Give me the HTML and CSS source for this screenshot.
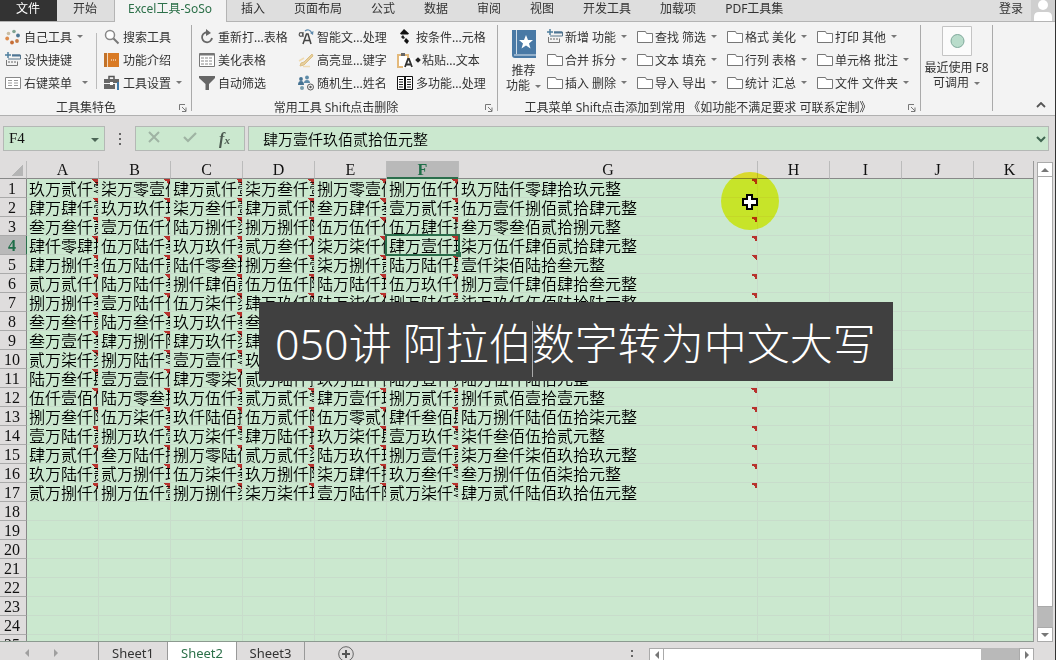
FILE: index.html
```
<!DOCTYPE html>
<html lang="zh-CN">
<head>
  <meta charset="UTF-8">
  <title>Excel工具-SoSo</title>
  <meta name="viewport" content="width=device-width, initial-scale=1.0">
  <link rel="stylesheet" href="styles.css">
</head>
<body>

  <!-- shared icons -->
  <svg class="sprite" aria-hidden="true">
    <symbol id="i-dots" viewBox="0 0 16 16">
      <circle cx="9" cy="2.500" r="1.800" fill="#7fa493"/><circle cx="3.500" cy="4.500" r="1.800" fill="#c9bda4"/>
      <circle cx="13" cy="6.500" r="1.900" fill="#4d7896"/><circle cx="2.200" cy="9.500" r="1.900" fill="#dd8b4c"/>
      <circle cx="12" cy="12" r="1.900" fill="#c57b45"/><circle cx="7" cy="13.500" r="1.900" fill="#c66d35"/>
    </symbol>
    <symbol id="i-form" viewBox="0 0 16 16">
      <path d="M3 0v6M0 3h6" stroke="#4d7f9f" stroke-width="1.500"/>
      <path d="M7 3h8.500v4H3" fill="none" stroke="#56748a"/><path d="M7 3.500h8" stroke="#4d7594" stroke-width="2"/>
      <path d="M1.500 8v5.500h11V9.500" fill="none" stroke="#777"/><path d="M3 10h8" stroke="#666" stroke-dasharray="2 1"/>
    </symbol>
    <symbol id="i-list" viewBox="0 0 16 16">
      <path d="M.5 2.500h15v11H.5z" fill="#fff" stroke="#888"/>
      <path d="M3 5.500h4M3 8h4M3 10.500h4M9 5.500h4M9 8h4M9 10.500h4" stroke="#999"/>
    </symbol>
    <symbol id="i-search" viewBox="0 0 16 16">
      <circle cx="6" cy="6" r="4.500" fill="#fff" stroke="#888" stroke-width="1.500"/><path d="M9.500 9.500l5 5" stroke="#777" stroke-width="2"/>
    </symbol>
    <symbol id="i-book" viewBox="0 0 16 16">
      <path d="M0 1h3v14H0z" fill="#c27229"/><path d="M4 1h11v14H4z" fill="#d97a24"/>
      <path d="M3.500 1v14" stroke="#f7d9bb"/><path d="M7 8h6" stroke="#fff" stroke-dasharray="1 1"/>
    </symbol>
    <symbol id="i-case" viewBox="0 0 16 16">
      <path d="M5 4V1.500h5V4" fill="none" stroke="#555" stroke-width="1.500"/><path d="M0 4h15v4H0zM0 9h11v5H0z" fill="#666"/>
      <path d="M6 7h3v3H6z" fill="#fff"/><path d="M14 7v8" stroke="#3f79a8" stroke-width="2"/>
    </symbol>
    <symbol id="i-redo" viewBox="0 0 16 16">
      <path d="M9.500 3.500A5 5 0 1 0 13 9" fill="none" stroke="#666" stroke-width="1.800"/><path d="M7 0l5 4-5 3z" fill="#666"/>
    </symbol>
    <symbol id="i-table" viewBox="0 0 16 16">
      <path d="M.5 1.500h15v13H.5z" fill="#fff" stroke="#777"/><path d="M1 2.500h14" stroke="#777" stroke-width="2"/>
      <path d="M2 6h12M2 9h12M2 12h12" stroke="#888" stroke-dasharray="3 1"/>
    </symbol>
    <symbol id="i-funnel" viewBox="0 0 16 16"><path d="M0 1h16v2l-6 6v6H6.500V9L0 3z" fill="#666"/></symbol>
    <symbol id="i-font" viewBox="0 0 16 16">
      <path d="M5 15l3.500-10h1.500L13 15M6.500 11.500h5" fill="none" stroke="#444" stroke-width="1.500"/>
      <circle cx="3" cy="5.500" r="1.800" fill="none" stroke="#555" stroke-width="1.200"/><path d="M5 3v5" stroke="#555" stroke-width="1.200"/>
      <path d="M7 2q4-3 7 2" fill="none" stroke="#5b87aa" stroke-width="1.200"/><path d="M15.500 2l-.5 4-3-2z" fill="#5b87aa"/>
    </symbol>
    <symbol id="i-brush" viewBox="0 0 16 16">
      <path d="M14 2L6 10l-3 1-1 3 4-1 9-9z" fill="#e7cf9d" stroke="#dbbf83"/><path d="M1 9l5-3M5 14.500h7" stroke="#efdcb4" stroke-width="1.500"/>
    </symbol>
    <symbol id="i-people" viewBox="0 0 16 16">
      <circle cx="3" cy="4" r="1.900" fill="#467393"/><path d="M0 10q0-4 3-4t3 4z" fill="#467393"/>
      <circle cx="9" cy="2.500" r="1.900" fill="#5d8ba8"/><path d="M6 8q0-3 3-3t3 3z" fill="#5d8ba8"/>
      <circle cx="4" cy="13" r="2" fill="#789cab"/>
      <circle cx="12.500" cy="12" r="3" fill="none" stroke="#555"/><circle cx="12.500" cy="12" r="1.200" fill="#555"/>
    </symbol>
    <symbol id="i-cond" viewBox="0 0 16 16">
      <path d="M7 0l5 4.500-1 1H4L3 4.500z" fill="#111"/><path d="M4 8l2-2 2 3-2 1z" fill="#222"/><path d="M9 9l3 3-2 3-3-3z" fill="#111"/>
    </symbol>
    <symbol id="i-paste" viewBox="0 0 16 16">
      <path d="M1 3h10v12H1z" fill="#fff" stroke="#e3b97b" stroke-width="2"/><path d="M4 1h4v3H4z" fill="#666"/>
      <path d="M6 6h10v10H6z" fill="#fff"/><path d="M8 15l3-8h1l3 8M9 12.500h5" fill="none" stroke="#333" stroke-width="1.800"/>
    </symbol>
    <symbol id="i-panes" viewBox="0 0 16 16">
      <path d="M.5 1.500h15v13H.5z" fill="#fff" stroke="#111"/><path d="M8 1v14" stroke="#111" stroke-width="2"/>
      <path d="M2 4.500h4M2 7h4M2 9.500h4M2 12h4M10 4.500h4M10 7h4M10 9.500h4M10 12h4" stroke="#111"/>
    </symbol>
    <symbol id="i-folder" viewBox="0 0 16 16"><path d="M.5 13.500v-11h8l1 2h6v9z" fill="#fff" stroke="#777"/></symbol>
    <symbol id="i-star" viewBox="0 0 26 30">
      <path d="M1 1h24v28H4q-3 0-3-3z" fill="#4979a5"/><path d="M5.500 1v24" stroke="#cfdde9"/><path d="M3 26h22" stroke="#dfe8f0"/>
      <path d="M15 6l2 5h5l-4 3.500 1.500 5-4.500-3-4.500 3 1.500-5L8 11h5z" fill="#fff"/>
    </symbol>
    <symbol id="i-launch" viewBox="0 0 8 8"><path d="M.5 6V.5H6M3 3l4 4M7 3.500V7.500H3" fill="none" stroke="#777"/></symbol>
  </svg>

  <nav class="tabs">
    <a class="tab file" href="#">文件</a>
    <a class="tab home" href="#">开始</a>
    <a class="tab active" href="#">Excel工具-SoSo</a>
    <a class="tab" href="#">插入</a>
    <a class="tab" href="#">页面布局</a>
    <a class="tab" href="#">公式</a>
    <a class="tab" href="#">数据</a>
    <a class="tab" href="#">审阅</a>
    <a class="tab" href="#">视图</a>
    <a class="tab" href="#">开发工具</a>
    <a class="tab" href="#">加载项</a>
    <a class="tab" href="#">PDF工具集</a>
    <a class="login" href="#">登录</a>
    <svg class="avatar" viewBox="0 0 24 21"><path fill="#cfcfcf" d="M0 0h24v21H0z"/><circle cx="12" cy="5" r="5" fill="#fff"/><path d="M3 21v-4q0-5 5-5h8q5 0 5 5v4z" fill="#fff"/></svg>
  </nav>

  <section class="ribbon">
    <div class="group features">
      <div class="tools">
        <button class="tool"><svg><use href="#i-dots"/></svg>自己工具<i class="caret"></i></button>
        <button class="tool"><svg><use href="#i-form"/></svg>设快捷键</button>
        <button class="tool"><svg><use href="#i-list"/></svg>右键菜单<i class="caret far"></i></button>
        <button class="tool"><svg><use href="#i-search"/></svg>搜索工具</button>
        <button class="tool"><svg><use href="#i-book"/></svg>功能介绍</button>
        <button class="tool"><svg><use href="#i-case"/></svg>工具设置<i class="caret"></i></button>
      </div>
      <div class="caption">工具集特色<svg class="launch"><use href="#i-launch"/></svg></div>
    </div>

    <div class="group common">
      <div class="tools">
        <button class="tool"><svg><use href="#i-redo"/></svg>重新打...表格</button>
        <button class="tool"><svg><use href="#i-table"/></svg>美化表格</button>
        <button class="tool"><svg><use href="#i-funnel"/></svg>自动筛选</button>
        <button class="tool"><svg><use href="#i-font"/></svg>智能文...处理</button>
        <button class="tool"><svg><use href="#i-brush"/></svg>高亮显...键字</button>
        <button class="tool"><svg><use href="#i-people"/></svg>随机生...姓名</button>
        <button class="tool"><svg><use href="#i-cond"/></svg>按条件...元格</button>
        <button class="tool"><svg><use href="#i-paste"/></svg><span class="diamond"></span>粘贴...文本</button>
        <button class="tool"><svg><use href="#i-panes"/></svg>多功能...处理</button>
      </div>
      <div class="caption">常用工具 Shift点击删除<svg class="launch"><use href="#i-launch"/></svg></div>
    </div>

    <div class="group menus">
      <div class="menus-body">
        <button class="big"><svg class="star"><use href="#i-star"/></svg><span>推荐</span><span>功能<i class="caret"></i></span></button>
        <div class="tools">
          <button class="tool"><svg><use href="#i-form"/></svg>新增 功能<i class="caret"></i></button>
          <button class="tool"><svg><use href="#i-folder"/></svg>合并 拆分<i class="caret"></i></button>
          <button class="tool"><svg><use href="#i-folder"/></svg>插入 删除<i class="caret"></i></button>
          <button class="tool"><svg><use href="#i-folder"/></svg>查找 筛选<i class="caret"></i></button>
          <button class="tool"><svg><use href="#i-folder"/></svg>文本 填充<i class="caret"></i></button>
          <button class="tool"><svg><use href="#i-folder"/></svg>导入 导出<i class="caret"></i></button>
          <button class="tool"><svg><use href="#i-folder"/></svg>格式 美化<i class="caret"></i></button>
          <button class="tool"><svg><use href="#i-folder"/></svg>行列 表格<i class="caret"></i></button>
          <button class="tool"><svg><use href="#i-folder"/></svg>统计 汇总<i class="caret"></i></button>
          <button class="tool"><svg><use href="#i-folder"/></svg>打印 其他<i class="caret"></i></button>
          <button class="tool"><svg><use href="#i-folder"/></svg>单元格 批注<i class="caret"></i></button>
          <button class="tool"><svg><use href="#i-folder"/></svg>文件 文件夹<i class="caret"></i></button>
        </div>
      </div>
      <div class="caption">工具菜单 Shift点击添加到常用 《如功能不满足要求 可联系定制》<svg class="launch"><use href="#i-launch"/></svg></div>
    </div>

    <div class="group recent">
      <button class="big"><svg class="record" viewBox="0 0 30 30"><path d="M.5.5h29v29H.5z" fill="#fbfbfb" stroke="#c4c4c4"/><circle cx="15.500" cy="15" r="6.500" fill="#b9dccb" stroke="#7fa99b"/></svg><span>最近使用 F8</span><span>可调用<i class="caret"></i></span></button>
    </div>
    <button class="collapse" aria-label="折叠功能区"><svg viewBox="0 0 10 6"><path d="M1 5l4-4 4 4" fill="none" stroke="#555" stroke-width="1.800"/></svg></button>
  </section>

  <section class="formula-bar">
    <div class="name-box">
      <input type="text" value="F4" aria-label="名称框">
      <button aria-label="名称列表"><i class="caret"></i></button>
    </div>
    <span class="grip"></span>
    <div class="fx-buttons">
      <button aria-label="取消"><svg viewBox="0 0 14 12"><path d="M2 1l10 10M12 1L2 11" stroke="#9fb3a3" stroke-width="2"/></svg></button>
      <button aria-label="输入"><svg viewBox="0 0 14 12"><path d="M1 6l4 4 8-8" fill="none" stroke="#9fb3a3" stroke-width="2.200"/></svg></button>
      <button class="fx" aria-label="插入函数">f<small>x</small></button>
    </div>
    <div class="formula">
      <input type="text" value="肆万壹仟玖佰贰拾伍元整" aria-label="编辑栏">
      <button aria-label="展开编辑栏"><svg viewBox="0 0 10 7"><path d="M1 1l4 4 4-4" fill="none" stroke="#3f6650" stroke-width="2"/></svg></button>
    </div>
  </section>

  <main class="workspace">
    <div class="grid">
      <table class="sheet">
        <colgroup>
          <col class="c-head"><col><col><col><col><col><col><col class="c-wide"><col><col><col><col>
        </colgroup>
        <thead>
          <tr><th class="corner"></th><th>A</th><th>B</th><th>C</th><th>D</th><th>E</th><th class="on">F</th><th>G</th><th>H</th><th>I</th><th>J</th><th>K</th></tr>
        </thead>
        <tbody id="rows"></tbody>
      </table>
    </div>
    <div class="v-scroll">
      <button aria-label="向上"><i class="arrow up"></i></button>
      <div class="thumb"></div>
      <div class="track"></div>
      <button aria-label="向下"><i class="arrow down"></i></button>
    </div>
    <div class="halo"></div>
    <svg class="pointer" viewBox="0 0 16 16"><path d="M5 1h5v4h5v6h-5v4H5v-4H1V5h4z" fill="#fff" stroke="#000" stroke-width="2"/></svg>
    <div class="title-card">050讲 阿拉伯<span class="ibeam"></span>数字转为中文大写</div>
  </main>

  <footer class="sheet-bar">
    <div class="sheet-nav">
      <button aria-label="上一个"><i class="arrow left"></i></button>
      <button aria-label="下一个"><i class="arrow right"></i></button>
    </div>
    <a class="sheet-tab" href="#">Sheet1</a>
    <a class="sheet-tab current" href="#">Sheet2</a>
    <a class="sheet-tab" href="#">Sheet3</a>
    <button class="add" aria-label="新工作表"><svg viewBox="0 0 16 16"><circle cx="8" cy="8" r="7.300" fill="none" stroke="#666"/><path d="M8 4v8M4 8h8" stroke="#555" stroke-width="2"/></svg></button>
    <span class="grip"></span>
    <div class="h-scroll">
      <button aria-label="向左"><i class="arrow left"></i></button>
      <div class="thumb"></div>
      <div class="track"></div>
      <button aria-label="向右"><i class="arrow right"></i></button>
    </div>
  </footer>

  <script>
    let data = [
      "玖万贰仟零 柒万零壹佰 肆万贰仟壹 柒万叁仟壹 捌万零壹佰 捌万伍仟伍 玖万陆仟零肆拾玖元整",
      "肆万肆仟壹 玖万玖仟玖 柒万叁仟壹 肆万贰仟陆 叁万肆仟叁 壹万贰仟叁 伍万壹仟捌佰贰拾肆元整",
      "叁万叁仟贰 壹万伍仟伍 陆万捌仟柒 捌万捌仟陆 伍万伍仟伍 伍万肆仟捌 叁万零叁佰贰拾捌元整",
      "肆仟零肆拾 伍万陆仟叁 玖万玖仟叁 贰万叁仟伍 柒万柒仟伍 肆万壹仟玖 柒万伍仟肆佰贰拾肆元整",
      "肆万捌仟叁 伍万陆仟贰 陆仟零叁拾 捌万叁仟壹 柒万捌仟贰 陆万陆仟肆 壹仟柒佰陆拾叁元整",
      "贰万贰仟伍 陆万陆仟叁 捌仟肆佰贰 伍万伍仟陆 陆万陆仟玖 伍万玖仟伍 捌万壹仟肆佰肆拾叁元整",
      "捌万捌仟叁 壹万陆仟伍 伍万柒仟柒 肆万玖仟陆 陆万柒仟伍 捌万陆仟壹 柒万玖仟伍佰陆拾陆元整",
      "叁万叁仟贰 陆万叁仟叁 玖万玖仟叁 叁万伍仟陆 伍万陆仟柒 玖万贰仟叁 陆万柒仟陆佰贰拾元整",
      "叁万壹仟叁 肆万捌仟陆 肆万玖仟柒 肆万柒仟贰 陆万捌仟壹 柒万贰仟伍 肆万玖仟叁佰元整",
      "贰万柒仟柒 捌万陆仟零 壹万壹仟零 玖万柒仟贰 陆万捌仟壹 柒万贰仟伍 肆万玖仟叁佰元整",
      "陆万叁仟肆 壹万壹仟伍 肆万零柒佰 贰万陆仟捌 玖万伍仟伍 陆万壹仟贰 陆万伍仟陆佰元整",
      "伍仟壹佰伍 陆万零叁拾 玖万伍仟叁 贰万贰仟零 肆万壹仟玖 捌万贰仟贰 捌仟贰佰壹拾壹元整",
      "捌万叁仟陆 伍万柒仟叁 玖仟陆佰捌 伍万贰仟陆 伍万零贰佰 肆仟叁佰肆 陆万捌仟陆佰伍拾柒元整",
      "壹万陆仟贰 捌万玖仟壹 玖万柒仟零 肆万陆仟捌 玖万柒仟肆 壹万玖仟零 柒仟叁佰伍拾贰元整",
      "肆万贰仟伍 叁万陆仟捌 捌万零陆佰 贰万贰仟柒 陆万玖仟玖 捌万壹仟贰 柒万叁仟柒佰玖拾玖元整",
      "玖万陆仟贰 贰万捌仟玖 伍万柒仟叁 玖万捌仟陆 柒万肆仟捌 玖万叁仟零 叁万捌仟伍佰柒拾元整",
      "贰万捌仟伍 捌万伍仟壹 捌万捌仟柒 柒万柒仟玖 壹万陆仟陆 贰万柒仟零 肆万贰仟陆佰玖拾伍元整"
    ];
    let html = "";
    for (let r = 1; r <= 25; r++) {
      let cells = data[r - 1] ? data[r - 1].split(" ") : [];
      html += "<tr><th" + (r == 4 ? " class='on'" : "") + ">" + r + "</th>";
      for (let c = 0; c < 11; c++) {
        let cls = cells[c] ? "note" : "";
        if (r == 4 && c == 5) cls += " selected";
        html += "<td class='" + cls + "'><div>" + (cells[c] || "") + "</div></td>";
      }
      html += "</tr>";
    }
    document.getElementById("rows").innerHTML = html;
  </script>
</body>
</html>
```
FILE: styles.css
```
* {
  box-sizing: border-box;
}

body {
  margin: 0;
  height: 100vh;
  display: flex;
  flex-direction: column;
  overflow: hidden;
  background: #dfdddd;
  border-right: 1px solid #333;
  font-family: "Noto Sans", "Noto Sans CJK SC", sans-serif;
  font-size: 12px;
  color: #333;
}

button, input {
  font: inherit;
  color: inherit;
  background: none;
  border: none;
  padding: 0;
  margin: 0;
  outline: none;
}

a {
  color: inherit;
  text-decoration: none;
}

.sprite {
  display: none;
}

.caret {
  display: inline-block;
  border: 3px solid transparent;
  border-top-color: #777;
  border-bottom: none;
  margin-left: 5px;
}

.caret.far {
  margin-left: 10px;
}

/* tabs */
.tabs {
  flex: none;
  display: flex;
  height: 22px;
  line-height: 18px;
  background: #dedede;
  border-bottom: 1px solid #b4b4b4;
}

.tab {
  padding: 0 15px 0 14px;
  white-space: nowrap;
}

.tab.file {
  background: #333;
  color: #fff;
  padding: 0 17px 0 16px;
}

.tab.home {
  padding: 0 17px 0 16px;
  border-right: 1px solid #b4b4b4;
}

.tab.active {
  height: 22px;
  padding: 0 14px 0 13px;
  background: #f3f3f3;
  border-right: 1px solid #b4b4b4;
  color: #2c7049;
}

.login {
  margin-left: auto;
  padding-right: 8px;
}

.avatar {
  width: 24px;
  height: 21px;
}

/* ribbon */
.ribbon {
  flex: none;
  display: flex;
  height: 94px;
  padding-top: 3px;
  background: #f3f3f3;
  border-bottom: 1px solid #b0b0b0;
}

.group {
  display: flex;
  flex-direction: column;
  height: 86px;
  border-right: 1px solid #aaa;
}

.tools {
  display: grid;
  grid-template-rows: repeat(3, 23px);
  grid-auto-flow: column;
  align-content: start;
}

.features {
  width: 192px;
  padding-left: 5px;
}

.features .tools {
  grid-template-columns: 99px 1fr;
  background: linear-gradient(#bbb, #bbb) 91px 8px / 1px 56px no-repeat;
}

.common {
  width: 306px;
  padding-left: 7px;
}

.common .tools {
  grid-template-columns: repeat(3, 99px);
}

.menus {
  width: 423px;
  padding-left: 2px;
}

.menus .tools {
  grid-template-columns: repeat(4, 90px);
}

.menus-body {
  display: flex;
}

.tool {
  display: flex;
  align-items: center;
  white-space: nowrap;
  text-align: left;
}

.tool svg {
  flex: none;
  width: 16px;
  height: 16px;
  margin-right: 3px;
}

.menus .tool svg {
  margin-right: 2px;
}

.diamond {
  width: 4px;
  height: 4px;
  margin-right: 2px;
  background: #222;
  transform: rotate(45deg);
}

.caption {
  display: flex;
  justify-content: center;
  align-items: center;
  flex: 1;
  padding-top: 4px;
  white-space: nowrap;
}

.launch {
  width: 20px;
  height: 8px;
  padding-left: 12px;
  margin: 2px 4px 0 auto;
}

.caption::before {
  content: "";
  margin-right: auto;
}

.big {
  display: flex;
  flex-direction: column;
  align-items: center;
  line-height: 15px;
}

.big .caret {
  vertical-align: 2px;
}

.menus .big {
  width: 47px;
  padding-top: 4px;
}

.star {
  width: 26px;
  height: 30px;
  margin-bottom: 4px;
}

.recent {
  width: 72px;
  align-items: center;
}

.recent .big {
  white-space: nowrap;
}

.record {
  width: 30px;
  height: 30px;
  margin: 1px 0 4px;
}

.collapse {
  margin: auto 9px 3px auto;
}

.collapse svg {
  width: 10px;
  height: 6px;
}

/* formula bar */
.formula-bar {
  flex: none;
  display: flex;
  height: 45px;
  padding: 10px 6px 10px 3px;
}

.name-box, .fx-buttons, .formula {
  display: flex;
  align-items: center;
  background: #cbe8cf;
  border: 1px solid #b4b8b5;
}

.name-box {
  width: 102px;
}

.name-box input {
  flex: 1;
  min-width: 0;
  padding-left: 5px;
  font-family: "Liberation Serif", serif;
  font-size: 15px;
  color: #111;
}

.name-box .caret {
  border-width: 4px;
  border-bottom: none;
  border-top-color: #4c6656;
  vertical-align: middle;
  margin-right: 5px;
}

.grip {
  width: 2px;
  height: 12px;
  background: repeating-linear-gradient(#666 0 2px, transparent 2px 5px);
}

.formula-bar .grip {
  margin: 7px 14px 0;
}

.fx-buttons {
  width: 110px;
  padding-right: 3px;
  margin-right: 3px;
  justify-content: space-around;
}

.fx-buttons svg {
  width: 14px;
  height: 12px;
}

.fx {
  font-family: "Liberation Serif", serif;
  font-size: 16px;
  font-style: italic;
  font-weight: bold;
  color: #4c5a50;
}

.fx small {
  font-size: 11px;
}

.formula {
  flex: 1;
}

.formula input {
  flex: 1;
  min-width: 0;
  padding-left: 14px;
  font-family: "Noto Sans CJK SC", sans-serif;
  font-size: 15px;
  font-weight: 350;
  color: #000;
}

.formula svg {
  width: 10px;
  height: 7px;
  margin-right: 2px;
}

/* worksheet */
.workspace {
  flex: 1;
  min-height: 0;
  display: flex;
  position: relative;
}

.grid {
  flex: 1;
  min-width: 0;
  overflow: hidden;
  background: linear-gradient(#dfdddd 17px, #999 17px 18px, #cbe8cf 18px);
  border-right: 1px solid #999;
  border-bottom: 1px solid #8c9a90;
}

.sheet {
  table-layout: fixed;
  width: 1046px;
  border-spacing: 0;
  font-size: 16px;
}

.sheet col {
  width: 72px;
}

.sheet .c-head {
  width: 27px;
}

.sheet .c-wide {
  width: 299px;
}

.sheet th {
  height: 19px;
  padding: 0;
  background: #dfdddd;
  border-right: 1px solid #888;
  border-bottom: 1px solid #aaa;
  font-family: "Liberation Serif", serif;
  font-weight: normal;
  line-height: 17px;
  color: #111;
}

.sheet tbody th {
  padding: 1px 2px 0 0;
}

.sheet thead th {
  height: 18px;
  border-right-color: #bbb;
  border-bottom-color: #888;
}

.sheet .corner {
  background: linear-gradient(135deg, #dfdddd 50%, #b5b5b5 50%) 12px 4px / 11px 11px no-repeat #dfdddd;
}

.sheet thead .on, .sheet tbody .on {
  background: #b9b9b9;
  color: #1f6e48;
  font-weight: bold;
}

.sheet thead .on {
  box-shadow: inset 0 -1px #2b6e4c;
  border-bottom-color: #2b6e4c;
}

.sheet tbody .on {
  border-right-color: #2b6e4c;
}

.sheet td {
  height: 19px;
  padding: 0;
  border-right: 1px solid #c8dccb;
  border-bottom: 1px solid #c8dccb;
}

.sheet td div {
  height: 18px;
  padding-left: 2px;
  overflow: hidden;
  white-space: nowrap;
  font-family: "Noto Sans CJK SC", sans-serif;
  font-weight: 350;
  line-height: 18px;
  color: #000;
}

.sheet .note {
  background: linear-gradient(to top right, transparent 50%, #b8322d 50%) top right / 6px 6px no-repeat;
}

.sheet .selected {
  position: relative;
}

.sheet .selected::before {
  content: "";
  position: absolute;
  inset: -2px;
  border: 2px solid #2b6e4c;
}

.sheet .selected::after {
  content: "";
  position: absolute;
  right: -3px;
  bottom: -3px;
  width: 5px;
  height: 5px;
  background: #2b6e4c;
}

/* scroll bars */
.arrow {
  display: block;
  width: 0;
  height: 0;
  margin: auto;
  border: 4px solid transparent;
}

.arrow.up { border-bottom-color: #777; border-top: none; }
.arrow.down { border-top-color: #777; border-bottom: none; }
.arrow.left { border-right-color: #777; border-left: none; }
.arrow.right { border-left-color: #777; border-right: none; }

.v-scroll {
  width: 16px;
  margin: 1px 2px 0 3px;
  display: flex;
  flex-direction: column;
}

.v-scroll button {
  height: 15px;
  background: #fff;
  border: 1px solid #aaa;
}

.v-scroll .thumb {
  flex: 1;
  background: #fff;
  border: 1px solid #aaa;
  border-top: none;
}

.v-scroll .track {
  height: 20px;
  background: #b9b9b9;
}

/* pointer highlight and title laid over the sheet */
.halo {
  position: absolute;
  left: 721px;
  top: 11px;
  width: 58px;
  height: 58px;
  border-radius: 50%;
  background: #fafb32;
  mix-blend-mode: multiply;
}

.pointer {
  position: absolute;
  left: 742px;
  top: 33px;
  width: 16px;
  height: 16px;
}

.title-card {
  position: absolute;
  left: 259px;
  top: 141px;
  height: 79px;
  padding: 4px 17px 0 16px;
  background: #404040;
  color: #fff;
  font-size: 43px;
  font-weight: 300;
  line-height: 75px;
  white-space: nowrap;
}

.ibeam {
  display: inline-block;
  width: 1px;
  height: 56px;
  margin-right: -1px;
  background: #aaa;
  vertical-align: middle;
}

/* sheet tabs */
.sheet-bar {
  flex: none;
  display: flex;
  height: 18px;
  line-height: 22px;
  font-size: 13px;
}

.sheet-nav {
  width: 98px;
  padding: 4px 40px 0 25px;
  display: flex;
  justify-content: space-between;
}

.sheet-nav .arrow {
  opacity: 0.6;
}

.sheet-tab {
  width: 69px;
  text-align: center;
  border-left: 1px solid #999;
  overflow: hidden;
}

.sheet-tab:last-of-type {
  border-right: 1px solid #999;
}

.sheet-tab.current {
  background: #fff;
  color: #2c7049;
}

.add {
  margin: 4px 0 0 33px;
  height: 16px;
}

.add svg {
  display: block;
  width: 16px;
  height: 16px;
}

.sheet-bar .grip {
  margin: 8px 16px 0 auto;
}

.h-scroll {
  width: 385px;
  margin: 6px 21px 0 0;
  display: flex;
}

.h-scroll button {
  width: 15px;
  background: #fff;
  border: 1px solid #aaa;
  border-bottom: none;
}

.h-scroll .thumb {
  flex: 1;
  background: #fff;
  border-top: 1px solid #aaa;
}

.h-scroll .track {
  width: 38px;
  background: #b9b9b9;
}
```
